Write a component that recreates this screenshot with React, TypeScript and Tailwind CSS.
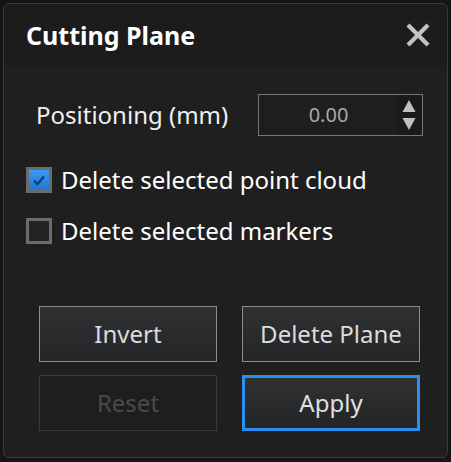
import React from "react";

const font = { fontFamily: '"Noto Sans", "Noto Sans CJK SC", sans-serif' };

function Btn({ children, variant = "normal" }: { children: React.ReactNode; variant?: "normal" | "disabled" | "primary" }) {
  const cls =
    variant === "primary"
      ? "border-[3px] border-[#2b8ff0] text-[#e0e0e0] bg-gradient-to-b from-[#303133] to-[#242527]"
      : variant === "disabled"
      ? "border border-[#3a3a3a] text-[#4a4a4a] bg-[#1e1e1e]"
      : "border border-[#8c8c8c] text-[#dcdcdc] bg-gradient-to-b from-[#303133] to-[#242527]";
  return (
    <div className={`w-[178px] h-[56px] flex items-center justify-center text-[24px] leading-none ${cls}`}>
      {children}
    </div>
  );
}

function Checkbox({ checked }: { checked: boolean }) {
  return (
    <div
      className={`w-[26px] h-[26px] shrink-0 border-[3px] border-[#6b6b6b] flex items-center justify-center ${
        checked ? "bg-gradient-to-b from-[#3a9bf2] to-[#1f78d0]" : "bg-[#232323]"
      }`}
    >
      {checked && (
        <svg width="16" height="16" viewBox="0 0 16 16">
          <path d="M3 8.5 L6.5 12 L13 4.5" fill="none" stroke="#0f3f78" strokeWidth="2.4" />
        </svg>
      )}
    </div>
  );
}

export default function App() {
  return (
    <div className="w-[451px] h-[462px] bg-[#151515] pt-[3px] pl-[3px] pr-[3px] pb-[4px]" style={font}>
      <div className="w-full h-full flex flex-col border border-[#3b3b3b] rounded-[6px] overflow-hidden bg-[#1f1f1f]">
        <div className="h-[62px] shrink-0 bg-[#1c1c1c] flex items-center justify-between pl-[22px] pr-[16px]">
          <span className="text-white font-bold text-[25px] leading-none">Cutting Plane</span>
          <svg width="26" height="26" viewBox="0 0 26 26">
            <path d="M3 3 L23 23 M23 3 L3 23" stroke="#c4c4c4" strokeWidth="4.2" strokeLinecap="butt" />
          </svg>
        </div>
        <div className="flex flex-col">
          <div className="flex items-center mt-[28px] pl-[32px]">
            <span className="text-[24px] text-[#f0f0f0] w-[222px] leading-none">Positioning (mm)</span>
            <div className="w-[165px] h-[42px] border border-[#777] flex bg-[#1e1e1e]">
              <div className="flex-1 flex items-center justify-center text-[20px] text-[#a8a8a8] pl-[2px]">0.00</div>
              <div className="w-[26px] flex flex-col items-center justify-center gap-[4px] bg-[#1a1a1a]">
                <svg width="14" height="14" viewBox="0 0 14 14">
                  <path d="M7 1 L13.5 13 L0.5 13 Z" fill="#c0c0c0" />
                </svg>
                <svg width="14" height="14" viewBox="0 0 14 14">
                  <path d="M0.5 1 L13.5 1 L7 13 Z" fill="#c0c0c0" />
                </svg>
              </div>
            </div>
          </div>
          <div className="flex items-center gap-[9px] pl-[22px] mt-[31px]">
            <Checkbox checked />
            <span className="text-[24px] text-white leading-none">Delete selected point cloud</span>
          </div>
          <div className="flex items-center gap-[9px] pl-[22px] mt-[25px]">
            <Checkbox checked={false} />
            <span className="text-[24px] text-white leading-none">Delete selected markers</span>
          </div>
          <div className="grid grid-cols-[178px_178px] gap-x-[25px] gap-y-[13px] pl-[35px] mt-[62px]">
            <Btn>Invert</Btn>
            <Btn>Delete Plane</Btn>
            <Btn variant="disabled">Reset</Btn>
            <Btn variant="primary">Apply</Btn>
          </div>
        </div>
      </div>
    </div>
  );
}
